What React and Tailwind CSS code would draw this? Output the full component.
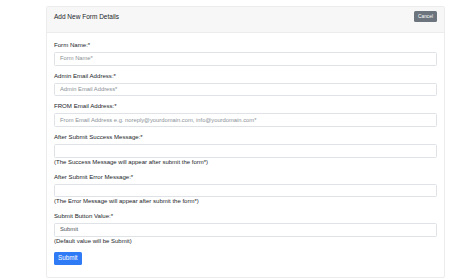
import React from "react";

const font = { fontFamily: '"Liberation Sans", Arial, sans-serif' };

function Field({ label, placeholder, value, helper, mb = "mb-[5.2px]" }) {
  return (
    <div className={mb}>
      <div className="h-[9px] leading-[9px] text-[6.1px] text-[#212529] mb-[3px]">{label}</div>
      <div className="h-[13.5px] w-full border border-[#dfe3e7] rounded-[1.5px] bg-white flex items-center pl-[5px] text-[5.8px]">
        {placeholder && <span className="text-[#8a9096]">{placeholder}</span>}
        {value && <span className="text-[#495057]">{value}</span>}
      </div>
      {helper && <div className="h-[9px] leading-[9px] text-[6px] text-[#212529]">{helper}</div>}
    </div>
  );
}

export default function App() {
  return (
    <div className="w-[474px] h-[279px] bg-white overflow-hidden" style={font}>
      <div className="ml-[46px] mt-[6px] w-[399px] h-[272px] border border-[#ececec] rounded-[2px] flex flex-col">
        <div className="h-[26px] bg-[#f7f7f7] border-b border-[#ececec] flex items-start justify-between px-[7px] pt-[4px]">
          <div className="mt-[1px] h-[9px] leading-[9px] text-[6.5px] text-[#212529]">Add New Form Details</div>
          <div className="w-[23px] h-[11px] bg-[#6c757d] rounded-[1.5px] text-white text-[4.8px] flex items-center justify-center">Cancel</div>
        </div>
        <div className="px-[7px] pt-[7px]">
          <Field label="Form Name:*" placeholder="Form Name*" />
          <Field label="Admin Email Address:*" placeholder="Admin Email Address*" />
          <Field label="FROM Email Address:*" placeholder="From Email Address e.g. noreply@yourdomain.com, info@yourdomain.com*" />
          <Field label="After Submit Success Message:*" helper="(The Success Message will appear after submit the form*)" mb="mb-[5px]" />
          <Field label="After Submit Error Message:*" helper="(The Error Message will appear after submit the form*)" mb="mb-[5px]" />
          <Field label="Submit Button Value:*" value="Submit" helper="(Default value will be Submit)" mb="mb-[6px]" />
          <div className="w-[27.5px] h-[13px] bg-[#2f7bf5] rounded-[1.5px] text-white text-[6.3px] flex items-center justify-center">Submit</div>
        </div>
      </div>
    </div>
  );
}
